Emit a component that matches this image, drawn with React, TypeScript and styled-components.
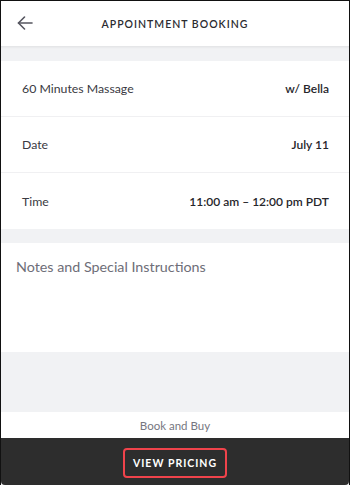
import React from 'react';
import styled, { createGlobalStyle } from 'styled-components';

const GlobalStyle = createGlobalStyle`
  html, body {
    margin: 0;
    padding: 0;
    background: #fff;
  }
  * {
    box-sizing: border-box;
  }
`;

const details = [
  { label: '60 Minutes Massage', value: 'w/ Bella' },
  { label: 'Date', value: 'July 11' },
  { label: 'Time', value: '11:00 am – 12:00 pm PDT' },
];

function App() {
  return (
    <>
      <GlobalStyle />
      <Frame>
        <Header>
          <BackButton aria-label="Back">
            <svg width="16" height="14" viewBox="0 0 16 14" fill="none" stroke="#55555f" strokeWidth="1.6" strokeLinecap="round" strokeLinejoin="round">
              <path d="M15 7H1.5" />
              <path d="M7.5 1L1.5 7l6 6" />
            </svg>
          </BackButton>
          <Title>Appointment Booking</Title>
        </Header>
        <Gap $height={15} $shadow />
        <Card>
          {details.map((d) => (
            <Row key={d.label}>
              <Label>{d.label}</Label>
              <Value>{d.value}</Value>
            </Row>
          ))}
        </Card>
        <Gap $height={14} />
        <Notes placeholder="Notes and Special Instructions" />
        <Filler />
        <Caption>Book and Buy</Caption>
        <BottomBar>
          <PricingButton>View Pricing</PricingButton>
        </BottomBar>
      </Frame>
    </>
  );
}

export default App;

const Frame = styled.div`
  width: 350px;
  height: 485px;
  display: flex;
  flex-direction: column;
  border: 1px solid #111;
  border-bottom: none;
  background: #f1f2f4;
  font-family: 'Lato', 'Noto Sans', sans-serif;
  overflow: hidden;
`

const Header = styled.div`
  position: relative;
  height: 45px;
  flex: none;
  display: flex;
  align-items: center;
  justify-content: center;
  background: #fff;
`

const BackButton = styled.button`
  position: absolute;
  left: 16px;
  top: 15px;
  display: flex;
  padding: 0;
  border: none;
  background: none;
  cursor: pointer;
`

const Title = styled.h1`
  margin: 0;
  font-size: 10.5px;
  font-weight: 600;
  letter-spacing: 1px;
  text-transform: uppercase;
  color: #2b2b30;
`

const Gap = styled.div<{ $height: number; $shadow?: boolean }>`
  height: ${(p) => p.$height}px;
  flex: none;
  background: #f1f2f4;
  box-shadow: ${(p) => (p.$shadow ? 'inset 0 3px 3px -2px rgba(0, 0, 0, 0.08)' : 'none')};
`

const Card = styled.div`
  background: #fff;
  flex: none;
`

const Row = styled.div`
  height: 56px;
  display: flex;
  align-items: center;
  justify-content: space-between;
  padding: 0 20px 0 21px;
  border-bottom: 1px solid #f0f0f2;

  &:last-child {
    border-bottom: none;
  }
`

const Label = styled.span`
  font-size: 12.3px;
  color: #3a3a42;
`

const Value = styled.span`
  font-size: 12px;
  font-weight: 600;
  color: #26262b;
`

const Notes = styled.textarea`
  height: 109px;
  flex: none;
  resize: none;
  border: none;
  outline: none;
  padding: 15px 15px;
  font-family: inherit;
  font-size: 14.3px;
  background: #fff;
  color: #333;

  &::placeholder {
    color: #6e6e78;
  }
`

const Filler = styled.div`
  flex: 1;
  background: #f1f2f4;
`

const Caption = styled.div`
  height: 26px;
  flex: none;
  display: flex;
  align-items: center;
  justify-content: center;
  background: #fff;
  font-size: 11.5px;
  color: #76767f;
`

const BottomBar = styled.div`
  height: 47px;
  flex: none;
  display: flex;
  align-items: center;
  justify-content: center;
  background: #2d2d2d;
  border-radius: 0 0 4px 4px;
`

const PricingButton = styled.button`
  width: 104px;
  height: 30px;
  margin-top: 3px;
  padding: 0;
  border: 2px solid #f0434b;
  border-radius: 4px;
  background: transparent;
  color: #fff;
  font-family: inherit;
  font-size: 10.5px;
  font-weight: 700;
  letter-spacing: 1px;
  text-transform: uppercase;
  white-space: nowrap;
  cursor: pointer;
`
